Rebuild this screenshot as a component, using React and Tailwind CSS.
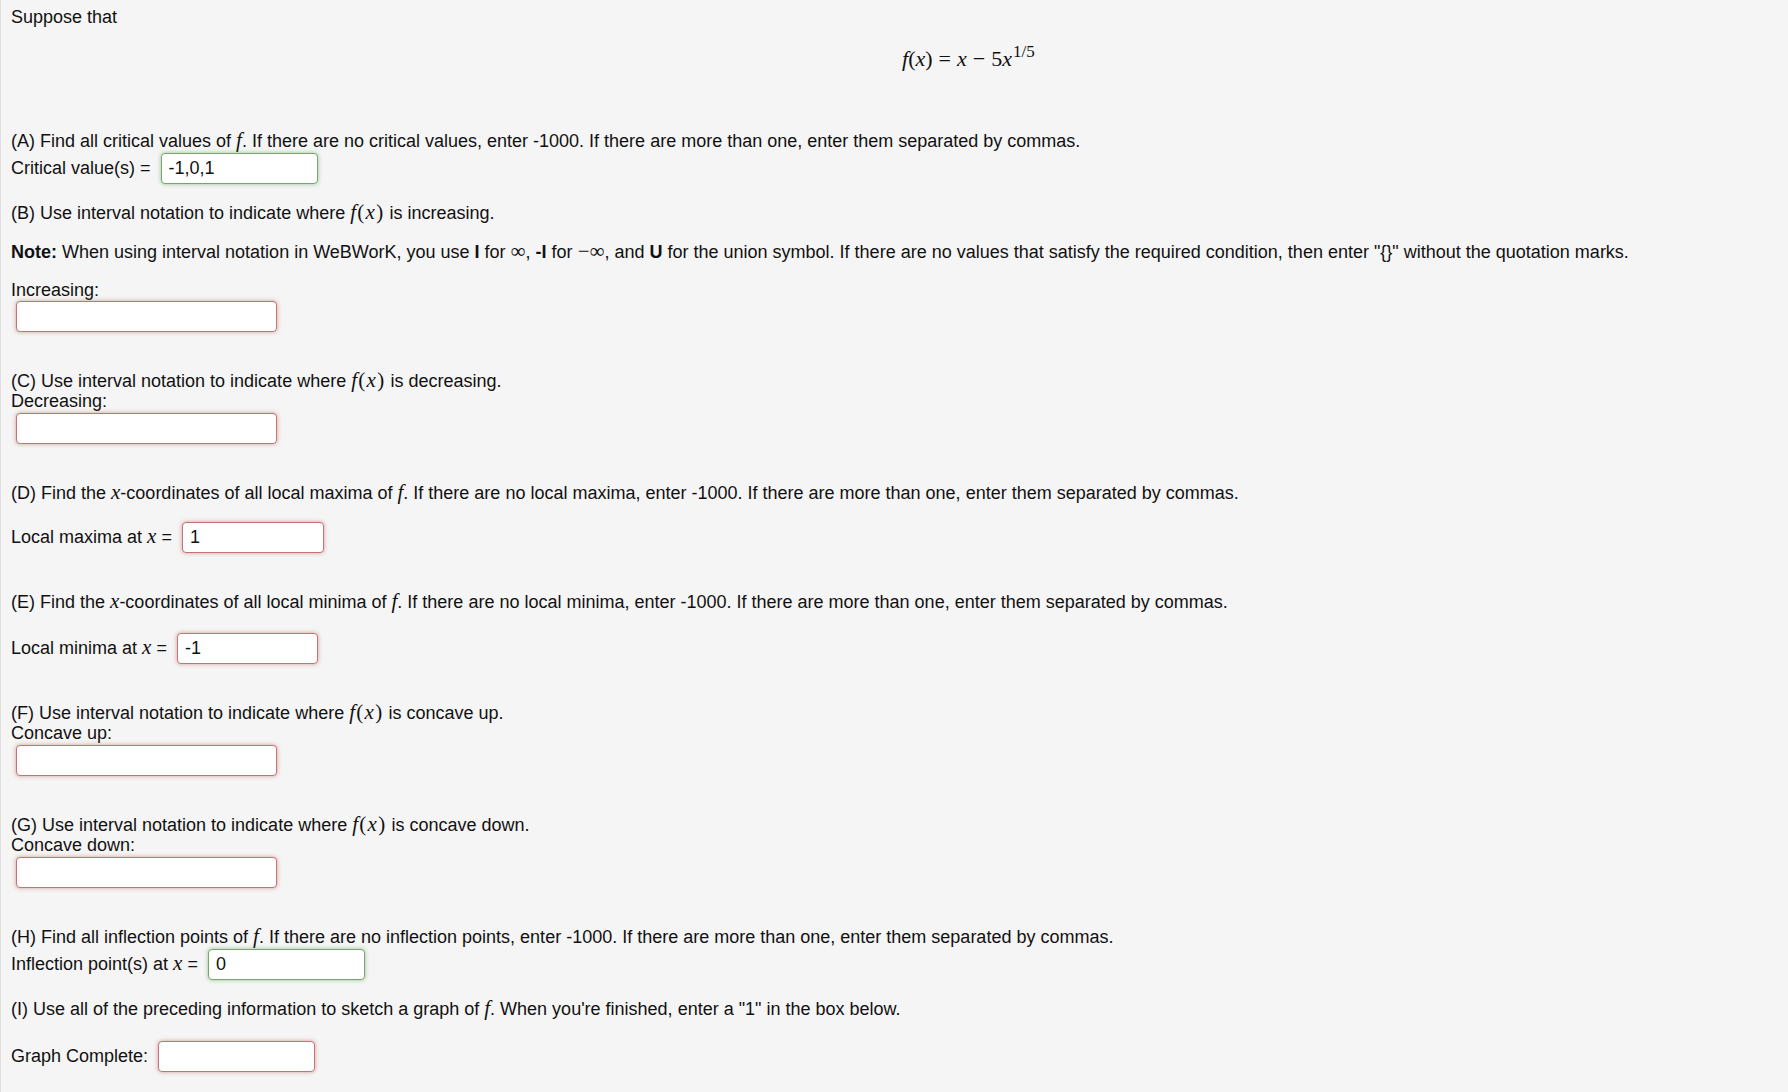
import React from 'react';

// math bits rendered in a serif italic, like the TeX output on the page
const V = ({ children }) => (
  <span className="font-['Liberation_Serif',serif] italic text-[21px] leading-none">{children}</span>
);

const Fx = () => (
  <span className="font-['Liberation_Serif',serif] text-[21px] leading-none tracking-[0.06em]">
    <i>f</i>(<i>x</i>)
  </span>
);

const Field = ({ value = '', ok = false, width }) => (
  <input
    readOnly
    value={value}
    className={`${width} h-[31px] bg-white rounded-[4px] border px-[7px] text-[18px] text-[#111] outline-none font-['Liberation_Sans',Arial,sans-serif] ${
      ok
        ? 'border-[#76a86e] shadow-[0_0_4px_rgba(90,160,80,0.6)]'
        : 'border-[#c47474] shadow-[0_0_4px_rgba(200,90,90,0.6)]'
    }`}
  />
);

// fixed height so the taller math glyphs don't stretch the line box
const Line = ({ className = '', children }) => (
  <div className={`h-[21px] leading-[21px] whitespace-nowrap ${className}`}>{children}</div>
);

const Row = ({ className = '', children }) => (
  <div className={`flex items-center h-[31px] whitespace-nowrap ${className}`}>{children}</div>
);

export default function App() {
  return (
    <div className="min-h-screen bg-[#f5f5f5] border-l border-[#dedede] pl-[10px] pt-[7px] text-[18px] text-[#111] font-['Liberation_Sans',Arial,sans-serif]">
      <Line>Suppose that</Line>

      <div className="mt-[19px] h-[24px] leading-[24px] pl-[891px] font-['Liberation_Serif',serif] text-[22px]">
        <i>f</i>(<i>x</i>)<span className="mx-[6px]">=</span><i>x</i>
        <span className="mx-[6px]">−</span>5<i>x</i>
        <span className="text-[17px] relative -top-[9px] ml-[1px]">1/5</span>
      </div>

      <Line className="mt-[59px]">
        (A) Find all critical values of <V>f</V>. If there are no critical values, enter -1000. If there are more than one, enter them separated by commas.
      </Line>
      <Row className="mt-[2px]">
        <span>Critical value(s) =</span>
        <span className="ml-[10px]">
          <Field value="-1,0,1" ok width="w-[157px]" />
        </span>
      </Row>

      <Line className="mt-[18px]">
        (B) Use interval notation to indicate where <Fx /> is increasing.
      </Line>
      <Line className="mt-[18px]">
        <b>Note:</b> When using interval notation in WeBWorK, you use <b>I</b> for{' '}
        <span className="font-['Liberation_Serif',serif] text-[21px] leading-none">∞</span>, <b>-I</b> for{' '}
        <span className="font-['Liberation_Serif',serif] text-[21px] leading-none">−∞</span>, and <b>U</b> for the union symbol. If there are no values that satisfy the required condition, then enter "{'{}'}" without the quotation marks.
      </Line>
      <Line className="mt-[18px]">Increasing:</Line>
      <div className="ml-[5px]">
        <Field width="w-[261px]" />
      </div>

      <Line className="mt-[38px]">
        (C) Use interval notation to indicate where <Fx /> is decreasing.
      </Line>
      <Line>Decreasing:</Line>
      <div className="ml-[5px] mt-[1px]">
        <Field width="w-[261px]" />
      </div>

      <Line className="mt-[38px]">
        (D) Find the <V>x</V>-coordinates of all local maxima of <V>f</V>. If there are no local maxima, enter -1000. If there are more than one, enter them separated by commas.
      </Line>
      <Row className="mt-[19px]">
        <span>
          Local maxima at <V>x</V> =
        </span>
        <span className="ml-[10px]">
          <Field value="1" width="w-[142px]" />
        </span>
      </Row>

      <Line className="mt-[38px]">
        (E) Find the <V>x</V>-coordinates of all local minima of <V>f</V>. If there are no local minima, enter -1000. If there are more than one, enter them separated by commas.
      </Line>
      <Row className="mt-[21px]">
        <span>
          Local minima at <V>x</V> =
        </span>
        <span className="ml-[10px]">
          <Field value="-1" width="w-[141px]" />
        </span>
      </Row>

      <Line className="mt-[38px]">
        (F) Use interval notation to indicate where <Fx /> is concave up.
      </Line>
      <Line>Concave up:</Line>
      <div className="ml-[5px] mt-[1px]">
        <Field width="w-[261px]" />
      </div>

      <Line className="mt-[38px]">
        (G) Use interval notation to indicate where <Fx /> is concave down.
      </Line>
      <Line>Concave down:</Line>
      <div className="ml-[5px] mt-[1px]">
        <Field width="w-[261px]" />
      </div>

      <Line className="mt-[38px]">
        (H) Find all inflection points of <V>f</V>. If there are no inflection points, enter -1000. If there are more than one, enter them separated by commas.
      </Line>
      <Row className="mt-[2px]">
        <span>
          Inflection point(s) at <V>x</V> =
        </span>
        <span className="ml-[10px]">
          <Field value="0" ok width="w-[157px]" />
        </span>
      </Row>

      <Line className="mt-[18px]">
        (I) Use all of the preceding information to sketch a graph of <V>f</V>. When you're finished, enter a "1" in the box below.
      </Line>
      <Row className="mt-[22px]">
        <span>Graph Complete:</span>
        <span className="ml-[10px]">
          <Field width="w-[157px]" />
        </span>
      </Row>
    </div>
  );
}
